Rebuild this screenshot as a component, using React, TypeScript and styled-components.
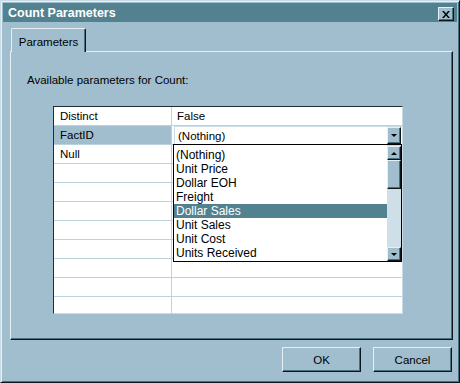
import React from "react";
import styled, { createGlobalStyle } from "styled-components";

const GlobalStyle = createGlobalStyle`
  html, body {
    margin: 0;
    padding: 0;
    background: #a0bece;
  }
  body {
    font-family: "Liberation Sans", Arial, sans-serif;
    font-size: 11.5px;
    color: #000;
  }
`;

const params = [
  { name: "Distinct", value: "False" },
  { name: "FactID", value: "(Nothing)", combo: true },
  { name: "Null", value: "" },
];

const options = [
  "(Nothing)",
  "Unit Price",
  "Dollar EOH",
  "Freight",
  "Dollar Sales",
  "Unit Sales",
  "Unit Cost",
  "Units Received",
];

const App = () => {
  const rows = [...params];
  while (rows.length < 11) rows.push({ name: "", value: "" });

  return (
    <>
      <GlobalStyle />
      <Window>
        <TitleBar>
          <Title>Count Parameters</Title>
          <CloseButton>
            <svg width="8" height="7" viewBox="0 0 8 7">
              <path d="M0 0h2l2 2.5L6 0h2L5 3.5 8 7H6L4 4.5 2 7H0l3-3.5z" fill="#000" />
            </svg>
          </CloseButton>
        </TitleBar>

        <Body>
          <TabStrip>
            <Tab>Parameters</Tab>
          </TabStrip>
          <Panel>
            <Label>Available parameters for Count:</Label>
            <GridWrap>
              <Grid>
                {rows.map((r, i) => (
                  <Row key={i}>
                    <NameCell $selected={!!r.combo}>{r.name}</NameCell>
                    <ValueCell>
                      {r.combo ? (
                        <Combo>
                          <ComboText>{r.value}</ComboText>
                          <ArrowButton>
                            <Arrow $dir="down" />
                          </ArrowButton>
                        </Combo>
                      ) : (
                        r.value
                      )}
                    </ValueCell>
                  </Row>
                ))}
              </Grid>
              <DropList>
                <Items>
                  {options.map((o) => (
                    <Item key={o} $selected={o === "Dollar Sales"}>
                      {o}
                    </Item>
                  ))}
                </Items>
                <ScrollBar>
                  <ArrowButton>
                    <Arrow $dir="up" />
                  </ArrowButton>
                  <Thumb />
                  <Track />
                  <ArrowButton>
                    <Arrow $dir="down" />
                  </ArrowButton>
                </ScrollBar>
              </DropList>
            </GridWrap>
          </Panel>
          <Footer>
            <Button>OK</Button>
            <Button>Cancel</Button>
          </Footer>
        </Body>
      </Window>
    </>
  );
};

const Window = styled.div`
  width: 460px;
  height: 383px;
  box-sizing: border-box;
  background: #a0bece;
  border: 1px solid;
  border-color: #c9dce6 #0c161b #0c161b #c9dce6;
  box-shadow: inset 1px 1px 0 #e6eff4, inset -1px -1px 0 #4e6e7c;
  padding: 2px;
  display: flex;
  flex-direction: column;
`;

const TitleBar = styled.div`
  height: 19px;
  background: #52828f;
  display: flex;
  align-items: center;
  justify-content: space-between;
  padding: 0 3px 0 5px;
`;

const Title = styled.span`
  color: #fff;
  font-weight: bold;
  font-size: 12.5px;
  font-family: "Liberation Sans", Arial, sans-serif;
`;

const CloseButton = styled.div`
  width: 16px;
  height: 14px;
  box-sizing: border-box;
  background: #a0bece;
  border: 1px solid;
  border-color: #e6eff4 #0c161b #0c161b #e6eff4;
  box-shadow: inset -1px -1px 0 #4e6e7c;
  display: flex;
  align-items: center;
  justify-content: center;
  margin-top: 3px;
`;

const Body = styled.div`
  flex: 1;
  display: flex;
  flex-direction: column;
  padding: 6px 4px 0 7px;
`;

const TabStrip = styled.div`
  display: flex;
  height: 23px;
  padding-left: 1px;
`;

const Tab = styled.div`
  width: 75px;
  box-sizing: border-box;
  border-top: 1px solid #e6eff4;
  border-left: 1px solid #e6eff4;
  border-right: 1px solid #0c161b;
  box-shadow: inset -1px 0 0 #4e6e7c;
  border-radius: 2px 2px 0 0;
  display: flex;
  align-items: center;
  justify-content: center;
  padding-top: 2px;
  position: relative;
  z-index: 1;
  margin-bottom: -1px;
  background: #a0bece;
`;

const Panel = styled.div`
  height: 289px;
  box-sizing: border-box;
  border: 1px solid;
  border-color: #e6eff4 #0c161b #0c161b #e6eff4;
  box-shadow: inset -1px -1px 0 #4e6e7c;
  padding: 22px 0 0 16px;
`;

const Label = styled.div`
  line-height: 13px;
  height: 13px;
`;

const GridWrap = styled.div`
  position: relative;
  margin: 19px 0 0 26px;
  width: 350px;
`;

const Grid = styled.div`
  height: 208px;
  box-sizing: border-box;
  overflow: hidden;
  background: #fff;
  border: 1px solid;
  border-color: #1c2e36 #c9dce6 #c9dce6 #1c2e36;
  display: flex;
  flex-direction: column;
`;

const Row = styled.div`
  display: grid;
  grid-template-columns: 118px 1fr;
  height: 19px;
  flex-shrink: 0;
  box-sizing: border-box;
  border-bottom: 1px solid #bcd2de;
`;

const NameCell = styled.div<{ $selected?: boolean }>`
  border-right: 1px solid #bcd2de;
  background: ${(p) => (p.$selected ? "#a0bece" : "#fff")};
  padding-left: 6px;
  display: flex;
  align-items: center;
`;

const ValueCell = styled.div`
  padding-left: 5px;
  display: flex;
  align-items: center;
  position: relative;
`;

const Combo = styled.div`
  flex: 1;
  align-self: stretch;
  display: flex;
  align-items: center;
  margin-left: -3px;
  border-top: 1px solid #c9dce6;
  border-left: 1px solid #c9dce6;
`;

const ComboText = styled.span`
  flex: 1;
  padding-left: 3px;
`;

const ArrowButton = styled.div`
  width: 14px;
  height: 14px;
  box-sizing: border-box;
  background: #a0bece;
  border: 1px solid;
  border-color: #e6eff4 #0c161b #0c161b #e6eff4;
  box-shadow: inset -1px -1px 0 #4e6e7c;
  display: flex;
  align-items: center;
  justify-content: center;
  flex-shrink: 0;
  ${Combo} & {
    height: 17px;
    margin-right: 1px;
  }
`;

const Arrow = styled.div<{ $dir: "up" | "down" }>`
  width: 0;
  height: 0;
  border-left: 3px solid transparent;
  border-right: 3px solid transparent;
  ${(p) =>
    p.$dir === "down"
      ? "border-top: 3px solid #000;"
      : "border-bottom: 3px solid #000;"}
`;

const DropList = styled.div`
  position: absolute;
  left: 120px;
  top: 38px;
  width: 229px;
  height: 118px;
  box-sizing: border-box;
  background: #fff;
  border: 1px solid #000;
  display: flex;
`;

const Items = styled.div`
  flex: 1;
  padding-top: 3px;
  font-size: 12px;
`;

const Item = styled.div<{ $selected?: boolean }>`
  height: 14px;
  line-height: 14px;
  padding-left: 2px;
  background: ${(p) => (p.$selected ? "#52828f" : "transparent")};
  color: ${(p) => (p.$selected ? "#fff" : "#000")};
`;

const ScrollBar = styled.div`
  width: 14px;
  display: flex;
  flex-direction: column;
  background: #cfdfe7;
  padding-top: 1px;
`;

const Thumb = styled.div`
  height: 29px;
  box-sizing: border-box;
  background: #a0bece;
  border: 1px solid;
  border-color: #e6eff4 #0c161b #0c161b #e6eff4;
  box-shadow: inset -1px -1px 0 #4e6e7c;
`;

const Track = styled.div`
  flex: 1;
`;

const Footer = styled.div`
  display: flex;
  justify-content: flex-end;
  gap: 12px;
  padding: 7px 1px 0 0;
`;

const Button = styled.div`
  width: 79px;
  height: 25px;
  box-sizing: border-box;
  border: 1px solid;
  border-color: #e6eff4 #0c161b #0c161b #e6eff4;
  box-shadow: inset -1px -1px 0 #4e6e7c;
  display: flex;
  align-items: center;
  justify-content: center;
`;

export default App;
